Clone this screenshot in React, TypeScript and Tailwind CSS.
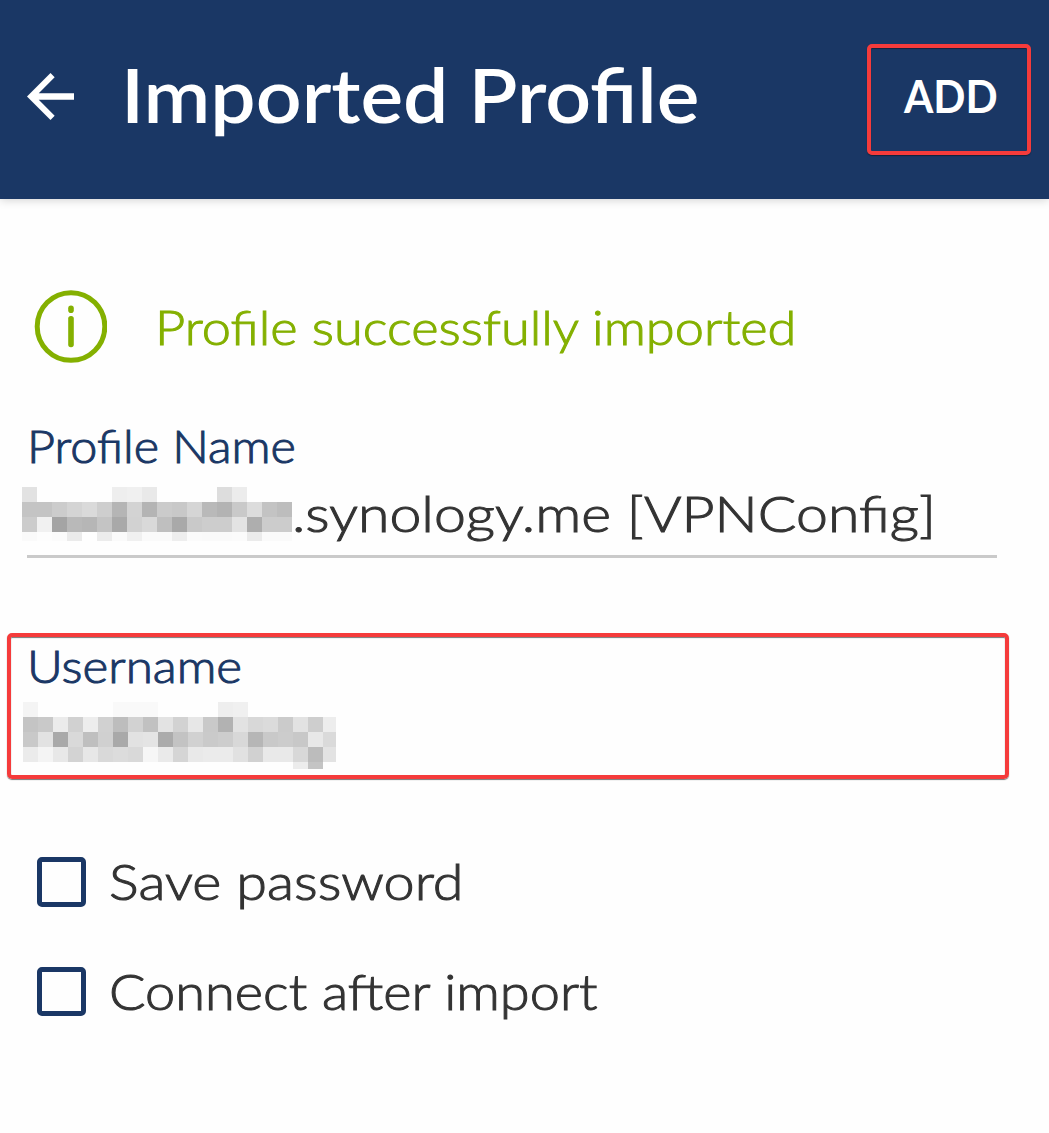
interface IMosaicProps {
  rows: string[]
  columns: string
  heights: string
}

interface ICheckRowProps {
  label: string
  box: string
  stretch: string
}

// every pair of characters is the grey level of one cell
const PROFILE_ROWS = [
  "e2fefefefefeeef0e9fefefefeddecfefefe",
  "c4c4ccd4daceb5d3b4cbc8d5b9b3c9dcc3bd",
  "ccf1a4b9b6c4a9d2d9bfa9c9cdcde3aecccc",
  "fafdfbebfeecfaf0fafaeefbfafafbebfafa",
]

const USER_ROWS = [
  "f4fefefefefef9f9f9fefefefeeef0fefefefefefe",
  "c4c9ebd1edd1bdd2c1e3d2e7c9b2e2d8dbcbe2ceed",
  "c9e2a9d9bfd0a9e2e4abc3d1cacdd8b6c9ccc8e8da",
  "ebf4e8d3e7d9dcd9f6ead5e9ebebe1d1e9e9d8bce3",
  "fefefefefefefefefefefefefefefefefefeecc4fe",
]

const Mosaic: React.FC<IMosaicProps> = ({ rows, columns, heights }) => {
  const cells = rows.flatMap((row) => row.match(/../g) ?? [])

  return (
    <div className={`grid shrink-0 ${columns} ${heights}`}>
      {cells.map((level, i) => (
        <span key={i} style={{ backgroundColor: `#${level}${level}${level}` }} />
      ))}
    </div>
  )
}

const BackIcon = () => (
  <svg className="size-[47px] shrink-0 fill-white" viewBox="4 4 16 16">
    <path d="M20 10.92H8L13.42 5.42L12 4L4 12l8 8 1.42-1.42L8 13.08h12z" />
  </svg>
)

const InfoIcon = () => (
  <svg className="size-[73px] shrink-0" viewBox="0 0 73 73" fill="none">
    <circle cx="37" cy="36.5" r="33.8" stroke="#84b000" strokeWidth="5" />
    <rect x="34.2" y="15.5" width="5.6" height="7.6" rx="2.8" fill="#84b000" />
    <rect x="34.2" y="26" width="5.6" height="31.2" rx="2.6" fill="#84b000" />
  </svg>
)

const CheckRow: React.FC<ICheckRowProps> = ({ label, box, stretch }) => (
  <label className="flex h-[50px] items-start gap-[23px]">
    <span className={`w-[49px] shrink-0 rounded-[5px] border-5 border-[#1a3765] ${box}`} />
    <span
      className={`-mt-px origin-left text-[50px] leading-[50px] font-light text-[#333333] [-webkit-text-stroke:1px_#333333] ${stretch}`}
    >
      {label}
    </span>
  </label>
)

export default function App() {
  return (
    <div className="h-[1133px] w-[1049px] overflow-hidden bg-[#fefefe] font-['Lato',sans-serif] whitespace-nowrap">
      <header className="flex h-[199px] items-start bg-[#1a3765] pt-11 pr-[18px] pl-[27px] shadow-[0_1px_9px_rgba(0,0,0,0.18)]">
        <div className="flex h-[105px] items-center">
          <BackIcon />
          <h1 className="-mt-1.5 ml-[47px] origin-left scale-x-[1.072] text-[75px] leading-[90px] font-semibold text-white">
            Imported Profile
          </h1>
        </div>
        <button className="ml-auto flex h-[111px] w-[164px] justify-center rounded-[5px] border-4 border-[#f53b3b] pt-[21px] pl-[3px] text-[45px] leading-[54px] font-bold text-white shadow-[0_1px_1px_#14223a,inset_0_1px_1px_#14223a]">
          <span className="scale-x-[0.94]">ADD</span>
        </button>
      </header>

      <main className="flex flex-col pt-[91px]">
        <div className="flex h-[73px] items-center gap-12 pl-[34px]">
          <InfoIcon />
          <p className="origin-left scale-x-[1.091] text-[48px] leading-[58px] font-light text-[#84b000] [-webkit-text-stroke:1px_#84b000]">
            Profile successfully imported
          </p>
        </div>

        <section className="mt-[58px] ml-[22px] flex h-[137px] w-[975px] flex-col">
          <h2 className="-mt-[2px] ml-[5px] origin-left scale-x-[1.078] self-start text-[45px] leading-[54px] font-light text-[#1a3765] [-webkit-text-stroke:1px_#1a3765]">
            Profile Name
          </h2>
          <div className="mt-[14px] flex h-[68px] items-start">
            <Mosaic
              rows={PROFILE_ROWS}
              columns="grid-cols-[repeat(18,15px)]"
              heights="grid-rows-[15px_15px_15px_9px]"
            />
            <span className="-mt-[4px] origin-left scale-x-[1.145] text-[50px] leading-[60px] font-light text-[#333333] [-webkit-text-stroke:1px_#333333]">
              .synology.me [VPNConfig]
            </span>
          </div>
          <div className="ml-[5px] h-[3px] shrink-0 bg-[#cacaca]" />
        </section>

        <section className="mt-[75px] ml-[7px] flex h-[146px] w-[1002px] flex-col rounded-[5px] border-4 border-[#f53b3b] pt-[2px] pl-3 shadow-[0_1px_1px_#777777,inset_0_1px_1px_#777777]">
          <h2 className="ml-[4px] origin-left scale-x-[1.096] self-start text-[45px] leading-[54px] font-light text-[#1a3765] [-webkit-text-stroke:1px_#1a3765]">
            Username
          </h2>
          <div className="mt-[9px]">
            <Mosaic
              rows={USER_ROWS}
              columns="grid-cols-[repeat(20,15px)_13px]"
              heights="grid-rows-[15px_15px_15px_15px_7px]"
            />
          </div>
        </section>

        <div className="mt-[78px] flex flex-col gap-[60px] pl-[37px]">
          <CheckRow label="Save password" box="h-[50px]" stretch="scale-x-[1.114]" />
          <CheckRow label="Connect after import" box="h-[49px]" stretch="scale-x-[1.083]" />
        </div>
      </main>
    </div>
  )
}
